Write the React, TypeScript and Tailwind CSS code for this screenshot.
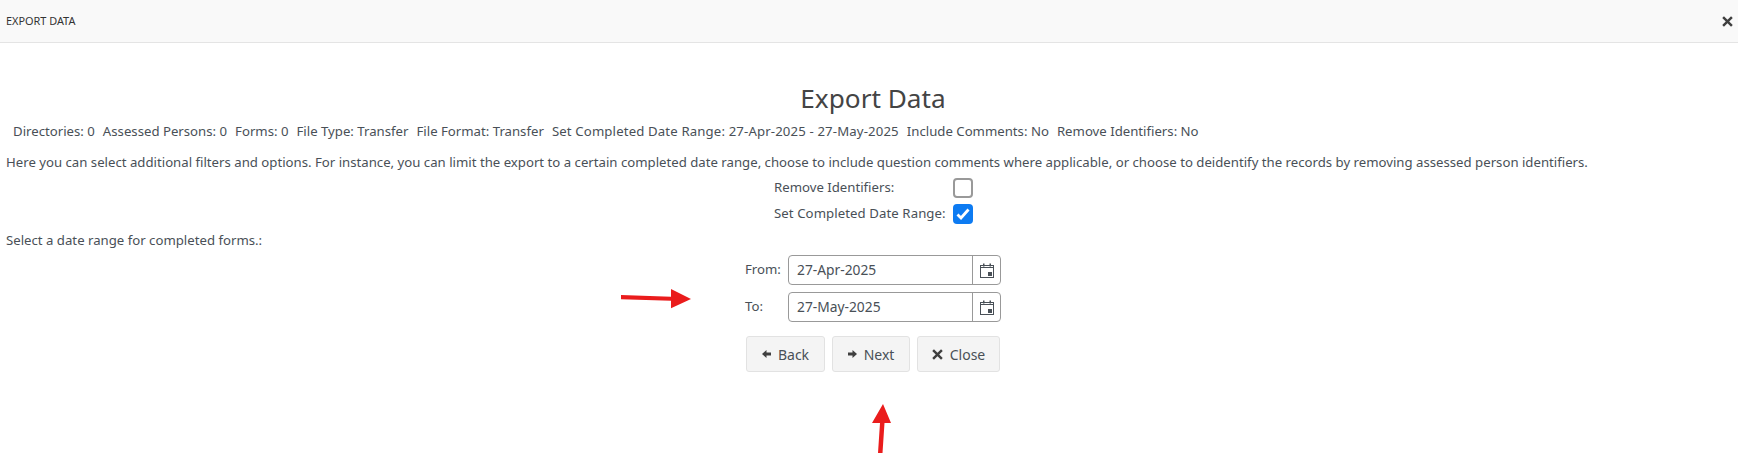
const font = { fontFamily: '"Noto Sans", sans-serif' };

function Cal() {
  return (
    <svg width="14" height="15" viewBox="0 0 14 15" fill="none">
      <rect x="0.5" y="2.5" width="13" height="12" stroke="#495057" strokeWidth="1" />
      <rect x="0.5" y="4" width="13" height="1" fill="#495057" />
      <rect x="3" y="0.5" width="1.5" height="3" fill="#495057" />
      <rect x="9.5" y="0.5" width="1.5" height="3" fill="#495057" />
      <rect x="8" y="9" width="4" height="4" fill="#495057" />
    </svg>
  );
}

function DateRow({ label, value }: { label: string; value: string }) {
  return (
    <div className="flex items-center h-[30px]">
      <span className="w-[43px]">{label}</span>
      <div className="flex h-[30px] w-[213px] border border-[#999] rounded-[4px] bg-white">
        <span className="flex-1 pl-[8px] leading-[28px] text-[13.8px]">{value}</span>
        <span className="w-[28px] border-l border-[#999] flex items-center justify-center"><Cal /></span>
      </div>
    </div>
  );
}

function Btn({ icon, label, w }: { icon: React.ReactNode; label: string; w: string }) {
  return (
    <div className={`${w} h-[36px] flex items-center justify-center gap-[7px] bg-[#f4f4f4] border border-[#e2e2e2] rounded-[3px] text-[14px]`}>
      {icon}
      <span>{label}</span>
    </div>
  );
}

const ArrowL = (
  <svg width="9" height="8" viewBox="0 0 9 8"><path d="M0 4 L4.5 0 V2.6 H9 V5.4 H4.5 V8 Z" fill="#3f3f3f" /></svg>
);
const ArrowR = (
  <svg width="9" height="8" viewBox="0 0 9 8"><path d="M9 4 L4.5 0 V2.6 H0 V5.4 H4.5 V8 Z" fill="#3f3f3f" /></svg>
);
const Cross = ({ s }: { s: number }) => (
  <svg width={s} height={s} viewBox="0 0 10 10"><path d="M1 1 L9 9 M9 1 L1 9" stroke="#3f3f3f" strokeWidth="2.2" /></svg>
);

export default function App() {
  return (
    <div style={font} className="relative w-[1738px] h-[453px] bg-white text-[#495057] text-[13.2px] overflow-hidden">
      <header className="h-[43px] bg-[#f9f9f9] border-b border-[#e4e4e4] flex items-center justify-between pl-[6px] pr-[5px]">
        <span className="text-[10.9px] text-[#333]">EXPORT DATA</span>
        <Cross s={11} />
      </header>

      <h1 className="text-center text-[26.2px] leading-[36px] mt-[37px] ml-[8px] text-[#444]">Export Data</h1>

      <div className="flex gap-[8px] pl-[13px] mt-[5px] leading-[20px]">
        <span>Directories: 0</span>
        <span>Assessed Persons: 0</span>
        <span>Forms: 0</span>
        <span>File Type: Transfer</span>
        <span>File Format: Transfer</span>
        <span className="tracking-[0.14px]">Set Completed Date Range: 27-Apr-2025 - 27-May-2025</span>
        <span>Include Comments: No</span>
        <span>Remove Identifiers: No</span>
      </div>

      <p className="pl-[6px] mt-[11px] leading-[20px] whitespace-nowrap">
        Here you can select additional filters and options. For instance, you can limit the export to a certain completed date range, choose to include question comments where applicable, or choose to deidentify the records by removing assessed person identifiers.
      </p>

      <div className="flex flex-col ml-[774px] mt-[6px] gap-[6px]">
        <div className="flex items-center h-[20px]">
          <span className="w-[179px]">Remove Identifiers:</span>
          <span className="w-[20px] h-[20px] rounded-[4px] border-2 border-[#999] bg-white" />
        </div>
        <div className="flex items-center h-[20px]">
          <span className="w-[179px] whitespace-nowrap tracking-[0.08px]">Set Completed Date Range:</span>
          <span className="w-[20px] h-[20px] rounded-[4px] bg-[#0d7bf2] flex items-center justify-center">
            <svg width="14" height="12" viewBox="0 0 14 12"><path d="M1.5 6.5 L5 10 L12.5 1.5" fill="none" stroke="white" strokeWidth="2.8" /></svg>
          </span>
        </div>
      </div>

      <p className="pl-[6px] mt-[6px] leading-[20px]">Select a date range for completed forms.:</p>

      <div className="flex flex-col ml-[745px] mt-[5px] gap-[7px]">
        <DateRow label="From:" value="27-Apr-2025" />
        <DateRow label="To:" value="27-May-2025" />
      </div>

      <div className="flex gap-[7px] ml-[746px] mt-[14px]">
        <Btn icon={ArrowL} label="Back" w="w-[79px]" />
        <Btn icon={ArrowR} label="Next" w="w-[78px]" />
        <Btn icon={<Cross s={11} />} label="Close" w="w-[83px]" />
      </div>

      <svg className="absolute left-[620px] top-[288px]" width="72" height="22" viewBox="0 0 72 22">
        <path d="M1 7 L51 8.7 L51 1 L71 11 L51 20.3 L51 12.7 L1 11.3 Z" fill="#ea1c1c" />
      </svg>
      <svg className="absolute left-[871px] top-[403px]" width="22" height="50" viewBox="0 0 22 50">
        <path d="M1 20 L12 1 L20 20 L13.5 20 L11.5 50 L7 50 L9 20 Z" fill="#ea1c1c" />
      </svg>
    </div>
  );
}
